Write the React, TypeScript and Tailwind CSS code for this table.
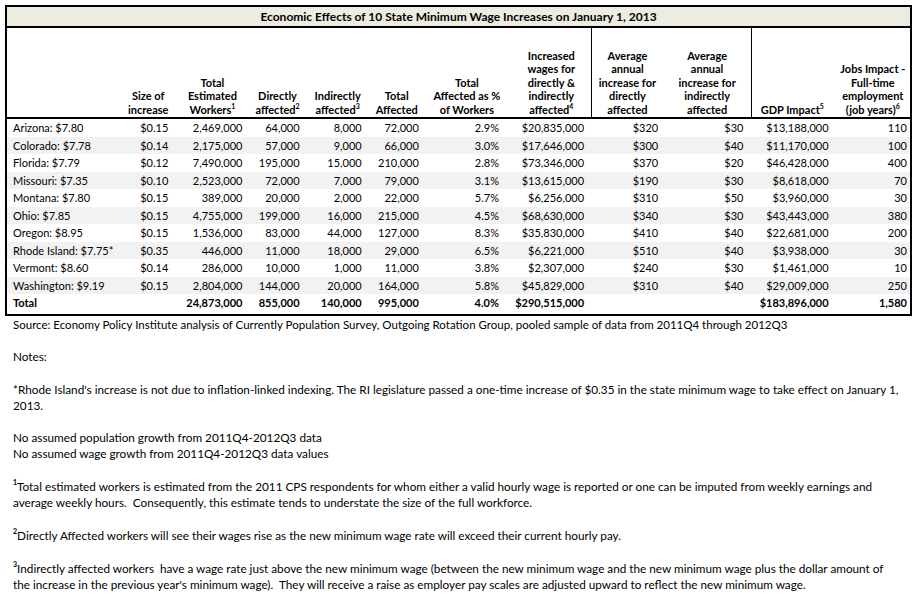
const widths = [117, 50, 78, 52, 68, 50, 90, 79, 72, 88, 81, 78];
const padR = ['pr-0', 'pr-[5px]', 'pr-[9px]', 'pr-[4px]', 'pr-[10px]', 'pr-[3px]', 'pr-[13px]', 'pr-[7px]', 'pr-[5px]', 'pr-[8px]', 'pr-[4px]', 'pr-[3px]'];

const rows: string[][] = [
  ['Arizona: $7.80', '$0.15', '2,469,000', '64,000', '8,000', '72,000', '2.9%', '$20,835,000', '$320', '$30', '$13,188,000', '110'],
  ['Colorado: $7.78', '$0.14', '2,175,000', '57,000', '9,000', '66,000', '3.0%', '$17,646,000', '$300', '$40', '$11,170,000', '100'],
  ['Florida: $7.79', '$0.12', '7,490,000', '195,000', '15,000', '210,000', '2.8%', '$73,346,000', '$370', '$20', '$46,428,000', '400'],
  ['Missouri: $7.35', '$0.10', '2,523,000', '72,000', '7,000', '79,000', '3.1%', '$13,615,000', '$190', '$30', '$8,618,000', '70'],
  ['Montana: $7.80', '$0.15', '389,000', '20,000', '2,000', '22,000', '5.7%', '$6,256,000', '$310', '$50', '$3,960,000', '30'],
  ['Ohio: $7.85', '$0.15', '4,755,000', '199,000', '16,000', '215,000', '4.5%', '$68,630,000', '$340', '$30', '$43,443,000', '380'],
  ['Oregon: $8.95', '$0.15', '1,536,000', '83,000', '44,000', '127,000', '8.3%', '$35,830,000', '$410', '$40', '$22,681,000', '200'],
  ['Rhode Island: $7.75*', '$0.35', '446,000', '11,000', '18,000', '29,000', '6.5%', '$6,221,000', '$510', '$40', '$3,938,000', '30'],
  ['Vermont: $8.60', '$0.14', '286,000', '10,000', '1,000', '11,000', '3.8%', '$2,307,000', '$240', '$30', '$1,461,000', '10'],
  ['Washington: $9.19', '$0.15', '2,804,000', '144,000', '20,000', '164,000', '5.8%', '$45,829,000', '$310', '$40', '$29,009,000', '250'],
];
const total = ['Total', '', '24,873,000', '855,000', '140,000', '995,000', '4.0%', '$290,515,000', '', '', '$183,896,000', '1,580'];

// footnote marks, raised above the line
function Sup({ n }: { n: string }) {
  return <span className="inline-block align-top text-[7px] leading-[7px] font-bold">{n}</span>;
}

const headers: React.ReactNode[] = [
  '',
  <>Size of<br />increase</>,
  <>Total<br />Estimated<br />Workers<Sup n="1" /></>,
  <>Directly<br />affected<Sup n="2" /></>,
  <>Indirectly<br />affected<Sup n="3" /></>,
  <>Total<br />Affected</>,
  <>Total<br />Affected as %<br />of Workers</>,
  <>Increased<br />wages for<br />directly &amp;<br />indirectly<br />affected<Sup n="4" /></>,
  <>Average<br />annual<br />increase for<br />directly<br />affected</>,
  <>Average<br />annual<br />increase for<br />indirectly<br />affected</>,
  <>GDP Impact<Sup n="5" /></>,
  <>Jobs Impact -<br />Full-time<br />employment<br />(job years)<Sup n="6" /></>,
];

function DataRow({ cells, shaded, bold }: { cells: string[]; shaded?: boolean; bold?: boolean }) {
  return (
    <tr className={`h-[17.5px] ${shaded ? 'bg-[#F2F2F2]' : ''} ${bold ? 'font-bold' : ''}`}>
      {cells.map((c, i) => (
        <td
          key={i}
          className={`p-0 leading-[17.5px] whitespace-nowrap ${i === 0 ? 'text-left pl-[6px]' : `text-right ${padR[i]}`}`}
        >
          {c}
        </td>
      ))}
    </tr>
  );
}

export default function App() {
  return (
    <div className="w-[923px] h-[598px] bg-white text-black overflow-hidden font-['Lato','Liberation_Sans',sans-serif]">
      <table className="ml-[5px] mt-[5px] w-[907px] table-fixed border-collapse border-2 border-black text-[11px]">
        <colgroup>
          {widths.map((w, i) => (
            <col key={i} style={{ width: w }} />
          ))}
        </colgroup>
        <thead>
          <tr>
            <th colSpan={12} className="h-[19px] p-0 bg-[#EEECE1] border-b-2 border-black text-[12px] font-bold leading-[19px] text-center">
              Economic Effects of 10 State Minimum Wage Increases on January 1, 2013
            </th>
          </tr>
          <tr className="h-[91px] border-b-2 border-black">
            {headers.map((h, i) => (
              <th
                key={i}
                className={`p-0 pb-[1px] align-bottom text-center font-bold leading-[13.5px] whitespace-nowrap ${
                  i === 8 || i === 10 ? 'border-l border-black' : ''
                } ${i === 11 ? 'pl-[3px]' : ''}`}
              >
                {h}
              </th>
            ))}
          </tr>
        </thead>
        <tbody>
          {rows.map((r, i) => (
            <DataRow key={r[0]} cells={r} shaded={i % 2 === 1} />
          ))}
          <DataRow cells={total} bold />
          <tr className="h-[3px]">
            <td colSpan={12} className="p-0" />
          </tr>
        </tbody>
      </table>

      <div className="pl-[13px] pr-[8px] text-[11.5px] leading-[16px] whitespace-nowrap">
        <p className="mt-[1px]">
          Source: Economy Policy Institute analysis of Currently Population Survey, Outgoing Rotation Group, pooled sample of data from 2011Q4 through 2012Q3
        </p>
        <div className="text-[11.75px]">
          <p className="mt-[16px]">Notes:</p>
          <p className="mt-[17px]">
            *Rhode Island's increase is not due to inflation-linked indexing. The RI legislature passed a one-time increase of $0.35 in the state minimum wage to take effect on January 1,
            <br />
            2013.
          </p>
          <p className="mt-[16px]">No assumed population growth from 2011Q4-2012Q3 data</p>
          <p>No assumed wage growth from 2011Q4-2012Q3 data values</p>
          <p className="mt-[17px]">
            <Sup n="1" />
            Total estimated workers is estimated from the 2011 CPS respondents for whom either a valid hourly wage is reported or one can be imputed from weekly earnings and
            <br />
            average weekly hours.&nbsp; Consequently, this estimate tends to understate the size of the full workforce.
          </p>
          <p className="mt-[17px]">
            <Sup n="2" />
            Directly Affected workers will see their wages rise as the new minimum wage rate will exceed their current hourly pay.
          </p>
          <p className="mt-[17px]">
            <Sup n="3" />
            Indirectly affected workers&nbsp; have a wage rate just above the new minimum wage (between the new minimum wage and the new minimum wage plus the dollar amount of
            <br />
            the increase in the previous year's minimum wage).&nbsp; They will receive a raise as employer pay scales are adjusted upward to reflect the new minimum wage.
          </p>
        </div>
      </div>
    </div>
  );
}
